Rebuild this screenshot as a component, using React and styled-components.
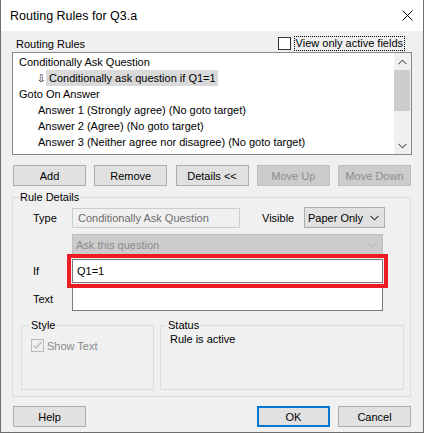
import React from 'react'
import styled, { createGlobalStyle } from 'styled-components'

const FONT = `'Liberation Sans', Arial, sans-serif`

const GlobalStyle = createGlobalStyle`
    body {
        margin: 0;
        background: #fff;
        font-family: ${FONT};
        font-size: 11px;
        color: #000;
    }
    * { box-sizing: border-box; }
`

const rules = [
    { text: 'Conditionally Ask Question', indent: 6 },
    { text: 'Conditionally ask question if Q1=1', indent: 24, selected: true },
    { text: 'Goto On Answer', indent: 6 },
    { text: 'Answer 1 (Strongly agree) (No goto target)', indent: 25 },
    { text: 'Answer 2 (Agree) (No goto target)', indent: 25 },
    { text: 'Answer 3 (Neither agree nor disagree) (No goto target)', indent: 25 },
    { text: 'Answer 4 (Disagree) (No goto target)', indent: 25 },
]

const Chevron = ({ dir = 'down', color = '#000' }) => (
    <svg width="9" height="6" viewBox="0 0 9 6">
        {dir === 'down'
            ? <polyline points="0.5,0.8 4.5,4.8 8.5,0.8" fill="none" stroke={color} strokeWidth="1.1" />
            : <polyline points="0.5,5.2 4.5,1.2 8.5,5.2" fill="none" stroke={color} strokeWidth="1.1" />}
    </svg>
)

const CheckBox = ({ checked, disabled }) => (
    <Box $disabled={disabled}>
        {checked && (
            <svg width="11" height="11" viewBox="0 0 11 11">
                <polyline points="1.5,5.5 4,8 9.5,2" fill="none" stroke={disabled ? '#bcbcbc' : '#000'} strokeWidth="1.3" />
            </svg>
        )}
    </Box>
)

const App = () => (
    <Window>
        <GlobalStyle />
        <TitleBar>
            <span>Routing Rules for Q3.a</span>
            <svg width="11" height="11" viewBox="0 0 11 11">
                <line x1="0.5" y1="0.5" x2="10.5" y2="10.5" stroke="#000" strokeWidth="1" />
                <line x1="10.5" y1="0.5" x2="0.5" y2="10.5" stroke="#000" strokeWidth="1" />
            </svg>
        </TitleBar>

        <Body>
            <HeaderRow>
                <span>Routing Rules</span>
                <CheckLabel>
                    <CheckBox />
                    <FocusText>View only active fields</FocusText>
                </CheckLabel>
            </HeaderRow>

            <ListBox>
                <Items>
                    {rules.map((r, i) => (
                        <Item key={i} $indent={r.indent}>
                            {r.selected && <Arrow>⇩</Arrow>}
                            {r.selected ? <Selected>{r.text}</Selected> : r.text}
                        </Item>
                    ))}
                </Items>
                <ScrollBar>
                    <ScrollArrow><Chevron dir="up" color="#606060" /></ScrollArrow>
                    <Thumb />
                    <ScrollTrack />
                    <ScrollArrow><Chevron dir="down" color="#606060" /></ScrollArrow>
                </ScrollBar>
            </ListBox>

            <ButtonRow>
                <Button>Add</Button>
                <Button>Remove</Button>
                <Button>Details &lt;&lt;</Button>
                <Button disabled>Move Up</Button>
                <Button disabled>Move Down</Button>
            </ButtonRow>

            <Group>
                <Legend>Rule Details</Legend>
                <Details>
                    <FormRow>
                        <FieldLabel>Type</FieldLabel>
                        <ReadOnlyBox>Conditionally Ask Question</ReadOnlyBox>
                        <VisibleLabel>Visible</VisibleLabel>
                        <Combo $width={81}>
                            <span>Paper Only</span>
                            <Chevron color="#333" />
                        </Combo>
                    </FormRow>
                    <FormRow $gap={6}>
                        <FieldLabel />
                        <Combo $width={311} disabled>
                            <span>Ask this question</span>
                            <Chevron color="#b8b8b8" />
                        </Combo>
                    </FormRow>
                    <FormRow $gap={4}>
                        <FieldLabel>If</FieldLabel>
                        <TextBox $marked>Q1=1</TextBox>
                    </FormRow>
                    <FormRow $gap={4}>
                        <FieldLabel>Text</FieldLabel>
                        <TextBox />
                    </FormRow>

                    <SubGroups>
                        <SubGroup $width={133}>
                            <Legend $left={8}>Style</Legend>
                            <StyleBody>
                                <CheckBox checked disabled />
                                <DisabledText>Show Text</DisabledText>
                            </StyleBody>
                        </SubGroup>
                        <SubGroup $width={244}>
                            <Legend $left={6}>Status</Legend>
                            <StatusBody>Rule is active</StatusBody>
                        </SubGroup>
                    </SubGroups>
                </Details>
            </Group>

            <BottomRow>
                <Button>Help</Button>
                <RightButtons>
                    <Button $default>OK</Button>
                    <Button>Cancel</Button>
                </RightButtons>
            </BottomRow>
        </Body>
    </Window>
)

export default App


const Window = styled.div`
    width: 424px;
    height: 433px;
    border: 1px solid #6e6e6e;
    border-top: 0;
    background: #f0f0f0;
    display: flex;
    flex-direction: column;
`

const TitleBar = styled.div`
    height: 31px;
    flex-shrink: 0;
    background: #fff;
    display: flex;
    align-items: center;
    justify-content: space-between;
    padding: 0 10px 0 9px;
    font-size: 12.5px;

    svg {
        display: block;
    }
`

const Body = styled.div`
    flex: 1;
    display: flex;
    flex-direction: column;
    padding: 4px 11px 5px 11px;
`

const HeaderRow = styled.div`
    height: 17px;
    display: flex;
    align-items: center;
    justify-content: space-between;
    padding: 0 7px 0 4px;
`

const CheckLabel = styled.label`
    display: flex;
    align-items: center;
    gap: 3px;
`

const Box = styled.span`
    width: 13px;
    height: 13px;
    border: 1px solid ${p => p.$disabled ? '#bcbcbc' : '#333'};
    background: ${p => p.$disabled ? '#f0f0f0' : '#fff'};
    display: flex;
    align-items: center;
    justify-content: center;
`

const FocusText = styled.span`
    border: 1px dotted #000;
    padding: 0 1px;
    line-height: 13px;
`

const ListBox = styled.div`
    height: 103px;
    border: 1px solid #828790;
    background: #fff;
    display: flex;
`

const Items = styled.div`
    flex: 1;
    padding-top: 1px;
    overflow: hidden;
`

const Item = styled.div`
    height: 16px;
    line-height: 16px;
    padding-left: ${p => p.$indent}px;
    white-space: nowrap;
`

const Arrow = styled.span`
    display: inline-block;
    width: 9px;
    font-family: 'DejaVu Sans', sans-serif;
    font-size: 10px;
`

const Selected = styled.span`
    display: inline-block;
    background: #d9d9d9;
    padding: 0 2px 0 3px;
`

const ScrollBar = styled.div`
    width: 17px;
    background: #f0f0f0;
    display: flex;
    flex-direction: column;
`

const ScrollArrow = styled.div`
    height: 17px;
    display: flex;
    align-items: center;
    justify-content: center;
`

const Thumb = styled.div`
    height: 41px;
    margin: 0 1px 0 0;
    background: #cdcdcd;
`

const ScrollTrack = styled.div`
    flex: 1;
`

const ButtonRow = styled.div`
    margin-top: 10px;
    display: flex;
    justify-content: space-between;
    padding: 0 1px;
`

const Button = styled.button`
    width: 73px;
    height: 21px;
    padding: 0;
    font-family: ${FONT};
    font-size: 11px;
    color: ${p => p.disabled ? '#8b8b8b' : '#000'};
    background: ${p => p.disabled ? '#cccccc' : '#e1e1e1'};
    border: ${p => p.$default ? '2px solid #0078d7' : p.disabled ? '1px solid #bfbfbf' : '1px solid #adadad'};
    border-radius: 0;
`

const Group = styled.fieldset`
    margin: 4px 1px 0 0;
    padding: 0;
    border: 1px solid #dcdcdc;
    min-width: 0;
`

const Legend = styled.legend`
    margin-left: ${p => p.$left ?? 6}px;
    padding: 0 1px;
    line-height: 14px;
`

const Details = styled.div`
    padding: 3px 6px 6px 8px;
`

const FormRow = styled.div`
    display: flex;
    align-items: center;
    margin-top: ${p => p.$gap ?? 0}px;
    padding-left: 12px;
`

const FieldLabel = styled.span`
    width: 39px;
    flex-shrink: 0;
`

const ReadOnlyBox = styled.div`
    width: 168px;
    height: 20px;
    border: 1px solid #cccccc;
    background: #f0f0f0;
    color: #6d6d6d;
    padding-left: 5px;
    line-height: 18px;
    white-space: nowrap;
`

const VisibleLabel = styled.span`
    width: 42px;
    margin-left: 22px;
`

const Combo = styled.div`
    width: ${p => p.$width}px;
    height: 21px;
    border: 1px solid ${p => p.disabled ? '#bfbfbf' : '#adadad'};
    background: ${p => p.disabled ? '#cccccc' : '#e1e1e1'};
    color: ${p => p.disabled ? '#8b8b8b' : '#000'};
    display: flex;
    align-items: center;
    justify-content: space-between;
    padding: 0 5px 0 3px;
`

const TextBox = styled.div`
    width: 311px;
    height: 24px;
    border: 1px solid #7a7a7a;
    background: #fff;
    padding-left: 4px;
    line-height: 22px;
    ${p => p.$marked && `
        outline: 4px solid #ed1c24;
        outline-offset: 1px;
        position: relative;
    `}
`

const SubGroups = styled.div`
    margin-top: 7px;
    display: flex;
    gap: 6px;
`

const SubGroup = styled.fieldset`
    width: ${p => p.$width}px;
    height: 72px;
    margin: 0;
    padding: 0;
    border: 1px solid #dcdcdc;
    min-width: 0;
`

const StyleBody = styled.div`
    display: flex;
    align-items: center;
    gap: 3px;
    padding: 7px 0 0 9px;
`

const DisabledText = styled.span`
    color: #8b8b8b;
`

const StatusBody = styled.div`
    padding: 1px 0 0 9px;
`

const BottomRow = styled.div`
    margin-top: 9px;
    display: flex;
    justify-content: space-between;
    padding: 0 1px;
`

const RightButtons = styled.div`
    display: flex;
    gap: 8px;
`
